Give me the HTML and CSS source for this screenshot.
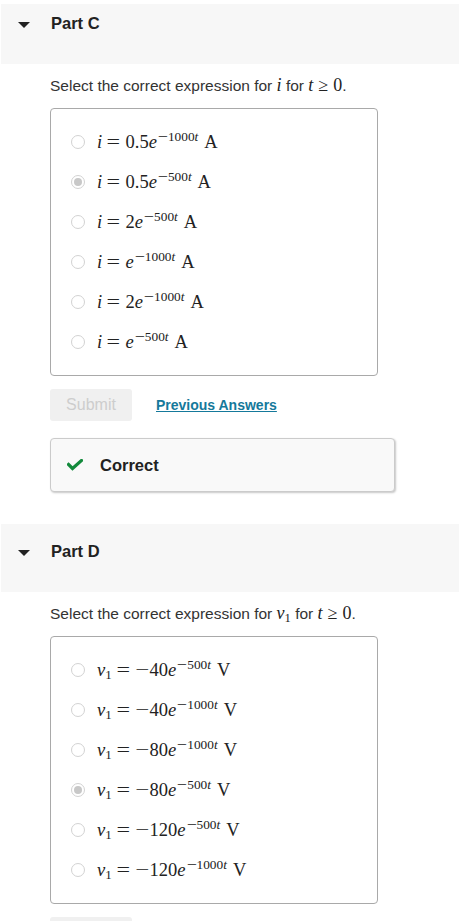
FILE: index.html
```html
<!DOCTYPE html>
<html lang="en">
<head>
<meta charset="utf-8">
<title>Parts C and D</title>
<link rel="stylesheet" href="styles.css">
</head>
<body>
<section class="part part-c">
  <div class="part-head">
    <span class="caret"></span>
    <h2 class="part-title">Part C</h2>
  </div>
  <div class="part-body">
    <p class="question">Select the correct expression for <span class="qm"><i>i</i></span> for <span class="qm"><i>t</i><span class="rel">≥</span>0</span>.</p>
    <div class="choices">
      <label class="opt"><span class="radio"></span><span class="math"><i>i</i><span class="rel">=</span>0.5<i>e</i><sup><span class="neg">−</span>1000<i>t</i></sup><span class="unit">A</span></span></label>
      <label class="opt"><span class="radio on"></span><span class="math"><i>i</i><span class="rel">=</span>0.5<i>e</i><sup><span class="neg">−</span>500<i>t</i></sup><span class="unit">A</span></span></label>
      <label class="opt"><span class="radio"></span><span class="math"><i>i</i><span class="rel">=</span>2<i>e</i><sup><span class="neg">−</span>500<i>t</i></sup><span class="unit">A</span></span></label>
      <label class="opt"><span class="radio"></span><span class="math"><i>i</i><span class="rel">=</span><i>e</i><sup><span class="neg">−</span>1000<i>t</i></sup><span class="unit">A</span></span></label>
      <label class="opt"><span class="radio"></span><span class="math"><i>i</i><span class="rel">=</span>2<i>e</i><sup><span class="neg">−</span>1000<i>t</i></sup><span class="unit">A</span></span></label>
      <label class="opt"><span class="radio"></span><span class="math"><i>i</i><span class="rel">=</span><i>e</i><sup><span class="neg">−</span>500<i>t</i></sup><span class="unit">A</span></span></label>
    </div>
    <div class="actions">
      <span class="submit">Submit</span>
      <a class="prev" href="#">Previous Answers</a>
    </div>
    <div class="feedback">
      <svg class="check" width="16" height="12" viewBox="0 0 16 12"><path d="M1.5 5.5 L5.5 9.5 L14.5 1.5" fill="none" stroke="#138a3c" stroke-width="3.2" stroke-linecap="square"/></svg>
      <span class="feedback-text">Correct</span>
    </div>
  </div>
</section>

<section class="part part-d">
  <div class="part-head">
    <span class="caret"></span>
    <h2 class="part-title">Part D</h2>
  </div>
  <div class="part-body">
    <p class="question">Select the correct expression for <span class="qm"><i>v</i><sub>1</sub></span> for <span class="qm"><i>t</i><span class="rel">≥</span>0</span>.</p>
    <div class="choices">
      <label class="opt"><span class="radio"></span><span class="math"><i>v</i><sub>1</sub><span class="rel">=</span><span class="neg">−</span>40<i>e</i><sup><span class="neg">−</span>500<i>t</i></sup><span class="unit">V</span></span></label>
      <label class="opt"><span class="radio"></span><span class="math"><i>v</i><sub>1</sub><span class="rel">=</span><span class="neg">−</span>40<i>e</i><sup><span class="neg">−</span>1000<i>t</i></sup><span class="unit">V</span></span></label>
      <label class="opt"><span class="radio"></span><span class="math"><i>v</i><sub>1</sub><span class="rel">=</span><span class="neg">−</span>80<i>e</i><sup><span class="neg">−</span>1000<i>t</i></sup><span class="unit">V</span></span></label>
      <label class="opt"><span class="radio on"></span><span class="math"><i>v</i><sub>1</sub><span class="rel">=</span><span class="neg">−</span>80<i>e</i><sup><span class="neg">−</span>500<i>t</i></sup><span class="unit">V</span></span></label>
      <label class="opt"><span class="radio"></span><span class="math"><i>v</i><sub>1</sub><span class="rel">=</span><span class="neg">−</span>120<i>e</i><sup><span class="neg">−</span>500<i>t</i></sup><span class="unit">V</span></span></label>
      <label class="opt"><span class="radio"></span><span class="math"><i>v</i><sub>1</sub><span class="rel">=</span><span class="neg">−</span>120<i>e</i><sup><span class="neg">−</span>1000<i>t</i></sup><span class="unit">V</span></span></label>
    </div>
    <div class="actions">
      <span class="submit">Submit</span>
    </div>
  </div>
</section>
</body>
</html>
```

FILE: styles.css
```css
body {
  margin: 0;
  font-family: "Liberation Sans", Arial, sans-serif;
  color: #333;
  background: #fff;
}

.part-head {
  display: flex;
  align-items: flex-start;
  margin-left: 1px;
  background: #f7f7f7;
  box-sizing: border-box;
}

.part-c .part-head {
  margin-top: 4px;
  height: 60px;
  padding-top: 10px;
}

.part-d .part-head {
  margin-top: 32px;
  height: 68px;
  padding-top: 18px;
}

.caret {
  width: 0;
  height: 0;
  margin: 8px 0 0 17px;
  border-left: 6.5px solid transparent;
  border-right: 6.5px solid transparent;
  border-top: 6px solid #222;
}

.part-title {
  margin: 0 0 0 21px;
  font-size: 16.5px;
  line-height: 18px;
  font-weight: bold;
  color: #222;
}

.part-body {
  padding-left: 50px;
}

.question {
  margin: 12px 0 0;
  font-size: 15.5px;
  line-height: 20px;
  height: 20px;
  color: #333;
}

.qm {
  font-family: "Liberation Serif", "Times New Roman", serif;
  font-size: 18px;
  line-height: 0;
  color: #222;
}

.qm .rel {
  margin: 0 5px;
}

.qm sub,
.math sub {
  font-size: 0.7em;
  vertical-align: -0.2em;
  line-height: 0;
}

.choices {
  margin-top: 12px;
  width: 328px;
  box-sizing: border-box;
  border: 1px solid #a9a9a9;
  border-radius: 4px;
  padding: 13px 0;
}

.opt {
  display: flex;
  align-items: center;
  height: 40px;
  padding-left: 20px;
}

.radio {
  flex: none;
  width: 14px;
  height: 14px;
  box-sizing: border-box;
  border: 1px solid #d2d2d2;
  border-radius: 50%;
  background: #fff;
  margin-right: 12px;
  display: flex;
  align-items: center;
  justify-content: center;
}

.radio.on::after {
  content: "";
  width: 8px;
  height: 8px;
  border-radius: 50%;
  background: #c8c8c8;
}

.math {
  font-family: "Liberation Serif", "Times New Roman", serif;
  font-size: 18.5px;
  color: #222;
  white-space: nowrap;
  line-height: 24px;
}

.math i,
.qm i {
  font-style: italic;
}

.math .rel {
  display: inline-block;
  margin: 0 7px 0 6px;
  transform: scaleX(1.3);
}

.neg {
  display: inline-block;
  transform: scaleX(1.35);
  margin: 0 2px;
}

.math sup {
  font-size: 0.72em;
  vertical-align: 0.52em;
  line-height: 0;
}

.math sup .neg {
  margin: 0 1.5px 0 2px;
}

.unit {
  margin-left: 6px;
}

.actions {
  display: flex;
  align-items: center;
  gap: 24px;
  margin-top: 13px;
}

.submit {
  width: 82px;
  height: 32px;
  display: flex;
  align-items: center;
  justify-content: center;
  background: #f0f0f0;
  color: #cdcdcd;
  font-size: 16px;
  border-radius: 3px;
}

.prev {
  color: #15799b;
  font-weight: bold;
  font-size: 14px;
  text-decoration: underline;
}

.feedback {
  margin-top: 17px;
  width: 345px;
  height: 54px;
  box-sizing: border-box;
  display: flex;
  align-items: center;
  padding-left: 16px;
  background: #f9f9f9;
  border: 1px solid #cbcbcb;
  border-radius: 4px;
  box-shadow: 1px 1px 2px rgba(0, 0, 0, 0.22);
}

.check {
  flex: none;
  margin-right: 17px;
}

.feedback-text {
  font-size: 16.5px;
  font-weight: bold;
  color: #222;
}
```
